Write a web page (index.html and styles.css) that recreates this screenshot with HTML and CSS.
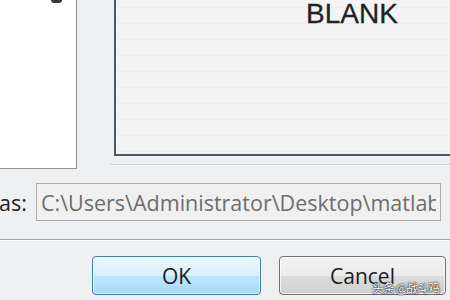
FILE: index.html
```html
<!DOCTYPE html>
<html>
<head>
<meta charset="utf-8">
<link rel="stylesheet" href="styles.css">
</head>
<body>
<div class="dialog">
  <div class="top">
    <div class="list"><div class="glyph"></div></div>
    <div class="preview-wrap">
      <div class="preview"><span class="blank">BLANK</span></div>
      <div class="preview-rule"></div>
    </div>
  </div>
  <div class="path-row">
    <span class="label">as:</span>
    <div class="path-box"><span class="path-text">C:\Users\Administrator\Desktop\matlab</span></div>
  </div>
  <div class="separator"></div>
  <div class="buttons">
    <button class="btn btn-ok">OK</button>
    <button class="btn btn-cancel">Cancel</button>
  </div>
  <div class="watermark">头条 @战斗鸡</div>
</div>
</body>
</html>
```
FILE: styles.css
```css
html, body {
  margin: 0;
  padding: 0;
}
body {
  width: 450px;
  height: 300px;
  overflow: hidden;
  background: #eff0f1;
  font-family: "Open Sans", "Noto Sans", "Noto Sans CJK SC", sans-serif;
}
.dialog {
  position: relative;
  width: 450px;
  height: 300px;
  overflow: hidden;
}
.top {
  display: flex;
  height: 171px;
  margin-top: -2px;
  margin-left: -2px;
}
.list {
  width: 79px;
  height: 171px;
  box-sizing: border-box;
  border: 1px solid #8f9193;
  background: #ffffff;
  flex: none;
}
.glyph {
  margin-left: 52px;
  margin-top: 1px;
  width: 11px;
  height: 3px;
  background: #3a3a3a;
  border-radius: 0 0 4px 4px;
}
.preview-wrap {
  flex: 1;
  margin-left: 37px;
  display: flex;
  flex-direction: column;
  min-width: 0;
}
.preview {
  height: 158px;
  width: 360px;
  box-sizing: border-box;
  border: 2px solid #4e5868;
  background-color: #f4f4f5;
  background-image: repeating-linear-gradient(to bottom, transparent 0, transparent 7px, rgba(225,228,232,0.45) 7px, rgba(225,228,232,0.45) 8px, transparent 8px, transparent 16px);
}
.blank {
  display: block;
  margin-left: 190px;
  font-family: "Liberation Sans", Arial, sans-serif;
  font-size: 28px;
  line-height: 27px;
  color: #1f2328;
  -webkit-text-stroke: 0.3px #1f2328;
}
.preview-rule {
  margin-top: 8px;
  margin-left: -4px;
  height: 1px;
  background: #cdd1d6;
  border-bottom: 1px solid #fafafa;
}
.path-row {
  display: flex;
  align-items: center;
  margin-top: 14px;
  height: 38px;
}
.label {
  width: 37px;
  flex: none;
  margin-left: -1px;
  font-size: 21.5px;
  color: #1e1e1e;
}
.path-box {
  width: 405px;
  height: 38px;
  box-sizing: border-box;
  border: 1px solid #acacac;
  background: #f0f0f0;
  padding: 0 4px 0 4px;
  display: flex;
  align-items: center;
}
.path-text {
  flex: 1;
  min-width: 0;
  overflow: hidden;
  white-space: nowrap;
  font-size: 21.5px;
  color: #6d6d6d;
}
.separator {
  margin-top: 18px;
  height: 1px;
  background: #a3a3a3;
  border-bottom: 1px solid #ffffff;
}
.buttons {
  display: flex;
  gap: 18px;
  margin-top: 15px;
  padding-left: 92px;
}
.btn {
  height: 39px;
  box-sizing: border-box;
  border-radius: 4px;
  font-family: "Open Sans", "Noto Sans", sans-serif;
  font-size: 21px;
  color: #1a1a1a;
  padding: 0;
}
.btn-ok {
  width: 169px;
  border: 1px solid #3c7fb1;
  background: linear-gradient(to bottom, #eaf6fd 0%, #d9f0fc 50%, #bee6fd 51%, #a7d9f5 100%);
  box-shadow: inset 0 0 0 1px rgba(255,255,255,0.6);
}
.btn-cancel {
  width: 167px;
  border: 1px solid #707070;
  background: linear-gradient(to bottom, #f2f2f2 0%, #ebebeb 50%, #dddddd 51%, #cfcfcf 100%);
  box-shadow: inset 0 0 0 1px rgba(255,255,255,0.7);
}
.watermark {
  position: absolute;
  left: 372px;
  top: 281px;
  font-family: "Noto Sans CJK SC", sans-serif;
  font-size: 12px;
  line-height: 14px;
  letter-spacing: -1px;
  white-space: nowrap;
  color: #ffffff;
  text-shadow: 0 0 2px #000, 0 0 1px #000;
}
```
